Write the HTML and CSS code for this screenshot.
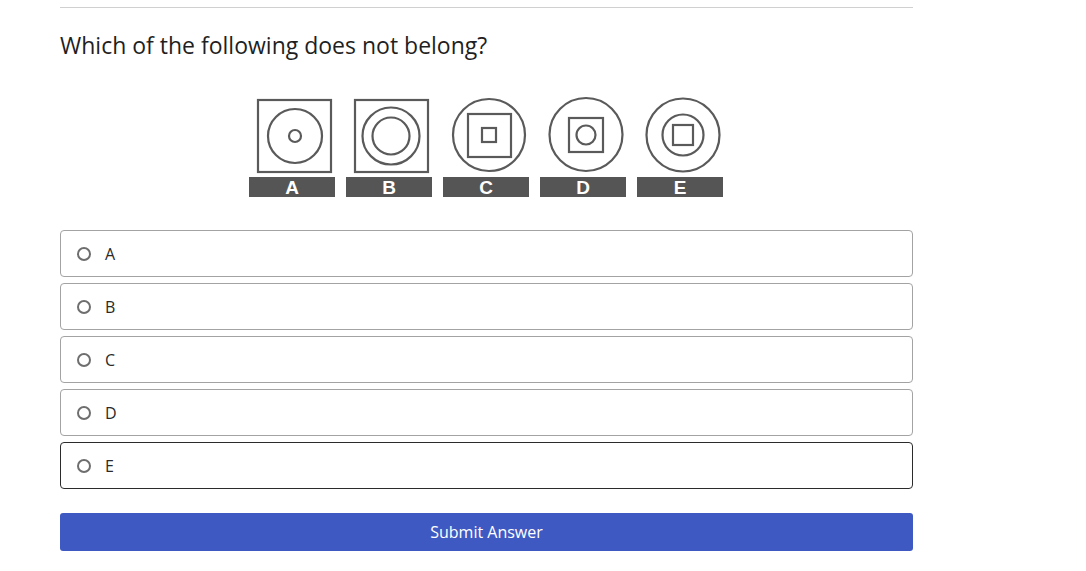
FILE: index.html
```html
<!DOCTYPE html>
<html>
<head>
  <title>Odd One Out</title>
  <link rel="stylesheet" href="styles.css">
</head>
<body>
  <div class="quiz">
    <hr class="divider">
    <h2 class="question">Which of the following does not belong?</h2>

    <div class="figure">
      <div class="figure-item">
        <svg width="76" height="76" viewBox="0 0 76 76">
          <rect x="4" y="3" width="73" height="72" class="shape" />
          <circle cx="41" cy="39" r="27" class="shape" />
          <circle cx="41" cy="39" r="6" class="shape" />
        </svg>
        <div class="figure-label">A</div>
      </div>
      <div class="figure-item">
        <svg width="76" height="76" viewBox="0 0 76 76">
          <rect x="4" y="3" width="73" height="72" class="shape" />
          <circle cx="40" cy="39" r="28.5" class="shape" />
          <circle cx="40" cy="39" r="18.5" class="shape" />
        </svg>
        <div class="figure-label">B</div>
      </div>
      <div class="figure-item">
        <svg width="76" height="76" viewBox="0 0 76 76">
          <circle cx="41" cy="38" r="36" class="shape" />
          <rect x="20" y="17" width="43" height="43" class="shape" />
          <rect x="34" y="31" width="14" height="14" class="shape" />
        </svg>
        <div class="figure-label">C</div>
      </div>
      <div class="figure-item">
        <svg width="76" height="76" viewBox="0 0 76 76">
          <circle cx="41" cy="37.5" r="36.5" class="shape" />
          <rect x="24" y="21" width="34" height="34" class="shape" />
          <circle cx="41" cy="38" r="9.5" class="shape" />
        </svg>
        <div class="figure-label">D</div>
      </div>
      <div class="figure-item">
        <svg width="76" height="76" viewBox="0 0 76 76">
          <circle cx="41" cy="38" r="36.5" class="shape" />
          <circle cx="41" cy="38" r="20.5" class="shape" />
          <rect x="31" y="28" width="20" height="20" class="shape" />
        </svg>
        <div class="figure-label">E</div>
      </div>
    </div>

    <form class="options">
      <label class="option"><input type="radio" name="answer" value="A"><span>A</span></label>
      <label class="option"><input type="radio" name="answer" value="B"><span>B</span></label>
      <label class="option"><input type="radio" name="answer" value="C"><span>C</span></label>
      <label class="option"><input type="radio" name="answer" value="D"><span>D</span></label>
      <label class="option active"><input type="radio" name="answer" value="E"><span>E</span></label>
      <button type="button" class="submit-button">Submit Answer</button>
    </form>
  </div>
</body>
</html>
```

FILE: styles.css
```css
* {
    margin: 0;
    padding: 0;
    box-sizing: border-box;
}

body {
    font-family: "Open Sans", "Noto Sans", sans-serif;
    background-color: #fff;
    color: #1f1f1f;
}

.quiz {
    width: 853px;
    margin-left: 60px;
    padding-top: 7px;
}

.divider {
    border: none;
    border-top: 1px solid #d0d0d0;
}

.question {
    font-size: 23px;
    font-weight: normal;
    margin-top: 22px;
    line-height: 30px;
}

/* picture of the five shapes */
.figure {
    display: flex;
    justify-content: center;
    gap: 11px;
    margin-top: 37px;
    padding-right: 1px;
}

.figure-item {
    width: 86px;
    display: flex;
    flex-direction: column;
    align-items: center;
}

.figure-item svg {
    display: block;
    overflow: visible;
}

.shape {
    fill: none;
    stroke: #5a5a5a;
    stroke-width: 2.2;
}

.figure-label {
    width: 100%;
    height: 20px;
    margin-top: 4px;
    background-color: #555;
    color: #fff;
    font-family: "Liberation Sans", Arial, sans-serif;
    font-weight: bold;
    font-size: 19px;
    line-height: 21px;
    text-align: center;
}

/* answer list */
.options {
    display: flex;
    flex-direction: column;
    gap: 6px;
    margin-top: 33px;
}

.option {
    display: flex;
    align-items: center;
    height: 47px;
    padding-left: 16px;
    border: 1px solid #a3a3a3;
    border-radius: 4px;
    font-size: 16px;
    color: #2a2a2a;
    cursor: pointer;
}

.option.active {
    border-color: #2b2b2b;
}

.option input {
    appearance: none;
    width: 14px;
    height: 14px;
    margin-right: 14px;
    border: 2px solid #6e6e6e;
    border-radius: 50%;
}

.submit-button {
    margin-top: 18px;
    height: 38px;
    border: none;
    border-radius: 3px;
    background-color: #3f59c2;
    color: #fff;
    font-family: "Open Sans", "Noto Sans", sans-serif;
    font-size: 16px;
    cursor: pointer;
}
```
